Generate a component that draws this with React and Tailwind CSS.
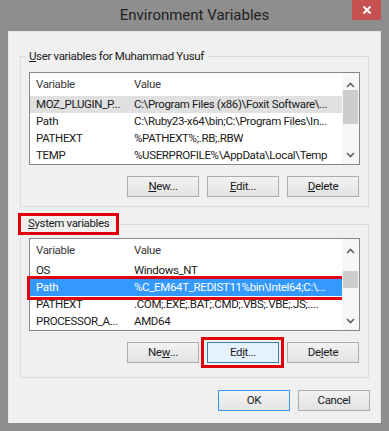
import React from "react";

const font = { fontFamily: 'Roboto, "Noto Sans", sans-serif' };

function Chevron({ up }) {
  return (
    <svg width="9" height="6" viewBox="0 0 9 6" className="block">
      {up ? (
        <path d="M1 5 L4.5 1.5 L8 5" fill="none" stroke="#606060" strokeWidth="1.6" />
      ) : (
        <path d="M1 1 L4.5 4.5 L8 1" fill="none" stroke="#606060" strokeWidth="1.6" />
      )}
    </svg>
  );
}

const T = "text-[11.5px] tracking-[-0.35px]";

function Btn({ children, focused, def, className = "" }) {
  let cls =
    "h-[21px] w-[72px] flex items-center justify-center text-[#1a1a1a] border " + T + " ";
  if (focused) cls += "border-[#3c7fb1] bg-[#e5f1fb] ";
  else if (def) cls += "border-[#3399ff] bg-gradient-to-b from-[#f3f3f3] to-[#e5e5e5] ";
  else cls += "border-[#acacac] bg-gradient-to-b from-[#f2f2f2] to-[#e3e3e3] ";
  return <div className={cls + className}>{children}</div>;
}

function ListBox({ rows, thumbTop, thumbH }) {
  return (
    <div className="relative h-[93px] border border-[#828790] bg-white flex">
      <div className="flex-1 min-w-0 flex flex-col">
        <div className={"h-[23px] flex items-center text-[#3a3a3a] " + T}>
          <span className="w-[104px] pl-[6px]">Variable</span>
          <span>Value</span>
        </div>
        {rows.map((r, i) => (
          <div key={i} className={"relative h-[17px] flex items-center " + T}>
            <div
              className={
                "absolute inset-y-0 left-0 right-0 " +
                (r.sel === "gray" ? "bg-[#e0e0e0]" : r.sel === "blue" ? "bg-[#3399ff]" : "")
              }
            />
            <span
              className={
                "relative w-[104px] shrink-0 pl-[6px] whitespace-nowrap " +
                (r.sel === "blue" ? "text-white" : "text-[#1a1a1a]")
              }
            >
              {r.name}
            </span>
            <span
              className={
                "relative flex-1 min-w-0 overflow-hidden whitespace-nowrap " +
                (r.sel === "blue" ? "text-white" : "text-[#1a1a1a]")
              }
            >
              {r.value}
            </span>
            {r.redbox && (
              <div className="absolute left-[-3px] right-[-3px] top-[-3px] bottom-[-4px] border-[3px] border-[#e0000c]" />
            )}
          </div>
        ))}
      </div>
      <div className="w-[17px] shrink-0 bg-[#f7f7f7] relative flex flex-col items-center">
        <div className="h-[17px] flex items-center justify-center mt-[3px]">
          <Chevron up />
        </div>
        <div className="flex-1" />
        <div className="h-[17px] flex items-center justify-center mb-[1px]">
          <Chevron />
        </div>
        <div
          className="absolute left-[1px] right-[1px] bg-[#cdcdcd]"
          style={{ top: thumbTop, height: thumbH }}
        />
      </div>
    </div>
  );
}

export default function App() {
  return (
    <div className="w-[389px] h-[431px] bg-[#8e8e8e] flex flex-col" style={font}>
      <div className="h-[31px] relative flex items-center justify-center">
        <span className="text-[15px] text-[#222] mt-[-1px]">Environment Variables</span>
        <div className="absolute left-[352px] top-0 w-[29px] h-[20px] bg-[#c75050] flex items-center justify-center">
          <svg width="10" height="8" viewBox="0 0 10 8">
            <path d="M1.5 0.5 L8.5 7.5 M8.5 0.5 L1.5 7.5" stroke="white" strokeWidth="2" />
          </svg>
        </div>
      </div>
      <div className="mx-[8px] h-[392px] bg-[#f0f0f0] border-l border-t border-r border-[#e4e4e4] flex flex-col">
        {/* User group */}
        <div className="relative mt-[24px] ml-[11px] w-[349px] h-[151px] border border-[#dcdcdc] px-[8px] pt-[15px]">
          <div className={"absolute left-[5px] top-[-9px] bg-[#f0f0f0] px-[3px] text-[#1a1a1a] leading-[16px] " + T}>
            <span className="underline">U</span>ser variables for Muhammad Yusuf
          </div>
          <ListBox
            thumbTop={17}
            thumbH={34}
            rows={[
              { name: "MOZ_PLUGIN_P...", value: "C:\\Program Files (x86)\\Foxit Software\\...", sel: "gray" },
              { name: "Path", value: "C:\\Ruby23-x64\\bin;C:\\Program Files\\In..." },
              { name: "PATHEXT", value: "%PATHEXT%;.RB;.RBW" },
              { name: "TEMP", value: "%USERPROFILE%\\AppData\\Local\\Temp" },
            ]}
          />
          <div className="flex justify-end gap-[8px] mt-[11px] mr-[1px]">
            <Btn>
              <span className="underline">N</span>ew...
            </Btn>
            <Btn>
              <span className="underline">E</span>dit...
            </Btn>
            <Btn>
              <span className="underline">D</span>elete
            </Btn>
          </div>
        </div>
        {/* System group */}
        <div className="relative mt-[17px] ml-[11px] w-[349px] h-[154px] border border-[#dcdcdc] px-[8px] pt-[13px]">
          <div className={"absolute left-[-3px] top-[-12px] border-[3px] border-[#e0000c] bg-[#f0f0f0] px-[7px] h-[22px] flex items-center text-[#1a1a1a] " + T}>
            <span className="underline">S</span>ystem variables
          </div>
          <ListBox
            thumbTop={32}
            thumbH={17}
            rows={[
              { name: "OS", value: "Windows_NT" },
              {
                name: "Path",
                value: "%C_EM64T_REDIST11%bin\\Intel64;C:\\...",
                sel: "blue",
                redbox: true,
              },
              { name: "PATHEXT", value: ".COM;.EXE;.BAT;.CMD;.VBS;.VBE;.JS;...." },
              { name: "PROCESSOR_A...", value: "AMD64" },
            ]}
          />
          <div className="flex justify-end gap-[8px] mt-[11px] mr-[1px]">
            <Btn>
              Ne<span className="underline">w</span>...
            </Btn>
            <div className="relative">
              <Btn focused>
                Ed<span className="underline">i</span>t...
              </Btn>
              <div className="absolute left-[-6px] right-[-5px] top-[-5px] bottom-[-5px] border-[3px] border-[#e0000c]" />
            </div>
            <Btn>
              De<span className="underline">l</span>ete
            </Btn>
          </div>
        </div>
        <div className="flex justify-end gap-[8px] mt-[12px] mr-[10px]">
          <Btn def>OK</Btn>
          <Btn>Cancel</Btn>
        </div>
      </div>
    </div>
  );
}
